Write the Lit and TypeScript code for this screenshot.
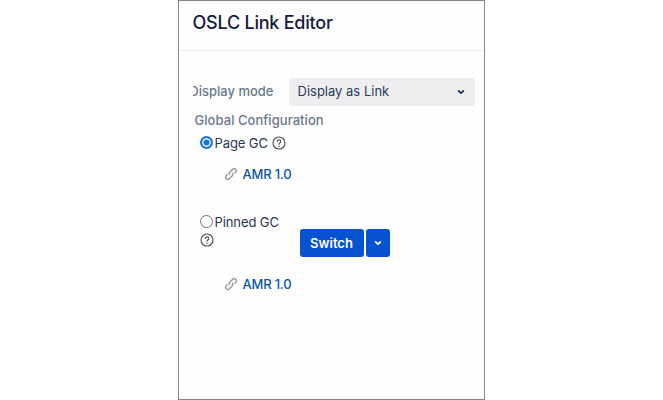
import { LitElement, html, css, svg } from "lit";
import { customElement } from "lit/decorators.js";

const help = html`<svg class="help" viewBox="0 0 14 14" width="14" height="14" fill="none" stroke="#474c55" stroke-width="1.1">
  <circle cx="7" cy="7" r="6"/>
  <path d="M5.2 5.5c0-1 .8-1.6 1.8-1.6s1.8.6 1.8 1.5c0 1.3-1.8 1.4-1.8 2.8" stroke-linecap="round"/>
  <circle cx="7" cy="10.2" r=".7" fill="#474c55" stroke="none"/>
</svg>`;

const link = html`<svg class="link" viewBox="0 0 14 14" width="14" height="14" fill="none" stroke="#96999f" stroke-width="1.4">
  ${svg`<path d="M5.9 8.1a2.2 2.2 0 0 1 0-3.1l2.8-2.8a2.2 2.2 0 0 1 3.1 3.1l-1.3 1.3"/>
  <path d="M8.1 5.9a2.2 2.2 0 0 1 0 3.1l-2.8 2.8a2.2 2.2 0 0 1-3.1-3.1l1.3-1.3"/>`}
</svg>`;

const chevron = html`<svg viewBox="0 0 10 10" width="10" height="10" fill="none" stroke="currentColor" stroke-width="1.7" stroke-linecap="round" stroke-linejoin="round">
  <path d="M2.6 3.9 5 6.2l2.4-2.3"/>
</svg>`;

@customElement("app-root")
export class AppRoot extends LitElement {
  static styles = css`
    :host {
      display: block;
      width: 663px;
      height: 400px;
      background: #fff;
      font-family: Inter, "Liberation Sans", sans-serif;
      color: #172b4d;
      overflow: hidden;
    }
    .panel {
      box-sizing: border-box;
      width: 307px;
      height: 400px;
      margin-left: 178px;
      border: 1.5px solid #85878a;
      background: #fefefe;
    }
    .head {
      height: 50px;
      box-sizing: border-box;
      border-bottom: 1.5px solid #ebedf0;
      padding: 11px 0 0 13.5px;
      font-size: 18px;
      line-height: 22px;
      font-weight: 500;
      color: #141c3a;
      letter-spacing: -0.23px;
    }
    .body {
      padding: 27px 9.5px 0 13.5px;
    }
    .mode {
      display: flex;
      align-items: center;
      height: 28px;
    }
    .mode-label {
      width: 96px;
      flex: none;
      display: flex;
      justify-content: flex-end;
      overflow: hidden;
      white-space: nowrap;
      font-size: 13px;
      font-weight: 500;
      color: #6b778c;
      padding: 0 15px 2px 0;
      box-sizing: border-box;
    }
    .select {
      flex: 1;
      height: 28px;
      box-sizing: border-box;
      border-radius: 3px;
      background: #eeeef0;
      display: flex;
      align-items: center;
      justify-content: space-between;
      padding: 0 9px 2px 9px;
      font-size: 13px;
      color: #2c3a55;
      font-weight: 400;
    }
    .select svg { color: #172b4d; margin-top: 2px; }
    .gc-title {
      margin: 6px 0 0 2px;
      font-size: 13px;
      line-height: 17px;
      font-weight: 500;
      color: #6b778c;
      letter-spacing: 0.05px;
    }
    .option {
      display: flex;
      align-items: center;
      gap: 2px;
      margin-left: 7px;
      font-size: 13px;
      line-height: 18px;
      color: #2a3550;
      letter-spacing: -0.1px;
    }
    .radio {
      width: 13px;
      height: 13px;
      box-sizing: border-box;
      border-radius: 50%;
      flex: none;
      margin-top: -2px;
    }
    .radio.on {
      border: 2px solid #1173e6;
      background: #1173e6;
      box-shadow: inset 0 0 0 1.5px #fff;
    }
    .radio.off {
      border: 1px solid #6f7278;
      background: #fff;
    }
    .help { margin-left: 2px; flex: none; }
    .page { margin-top: 5px; }
    .gc-link {
      display: flex;
      align-items: center;
      gap: 4px;
      margin-left: 31px;
      font-size: 13px;
      font-weight: 500;
      color: #0b56a4;
      line-height: 18px;
      letter-spacing: -0.2px;
    }
    .gc-link span { margin-left: 1px; }
    .page-link { margin-top: 13px; }
    .pinned {
      display: flex;
      margin: 30px 0 0 7px;
      height: 58px;
    }
    .pinned-left {
      width: 100px;
      flex: none;
    }
    .pinned-left .option { margin-left: 0; }
    .pinned-left .help { margin: 2px 0 0 0; display: block; }
    .btns {
      display: flex;
      gap: 2px;
      padding-top: 16px;
    }
    .btn {
      height: 28px;
      box-sizing: border-box;
      background: #0652cf;
      color: #fff;
      border-radius: 3px;
      display: flex;
      align-items: center;
      justify-content: center;
      font-size: 13px;
      font-weight: 600;
    }
    .switch { width: 64px; }
    .more { width: 24px; }
    .pin-link { margin-top: 4px; }
  `;

  render() {
    return html`<div class="panel">
      <div class="head">OSLC Link Editor</div>
      <div class="body">
        <div class="mode">
          <div class="mode-label"><span>Display mode</span></div>
          <div class="select">Display as Link ${chevron}</div>
        </div>
        <div class="gc-title">Global Configuration</div>
        <div class="option page"><span class="radio on"></span>Page GC ${help}</div>
        <div class="gc-link page-link">${link}<span>AMR 1.0</span></div>
        <div class="pinned">
          <div class="pinned-left">
            <div class="option"><span class="radio off"></span>Pinned GC</div>
            ${help}
          </div>
          <div class="btns">
            <div class="btn switch">Switch</div>
            <div class="btn more">${chevron}</div>
          </div>
        </div>
        <div class="gc-link pin-link">${link}<span>AMR 1.0</span></div>
      </div>
    </div>`;
  }
}
